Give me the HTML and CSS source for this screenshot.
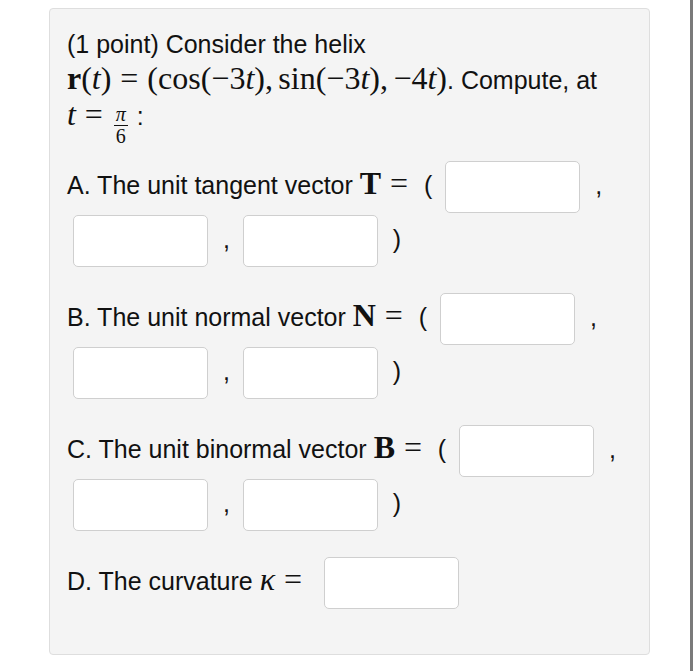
FILE: index.html
```html
<!DOCTYPE html>
<html>
<head>
<meta charset="utf-8">
<link rel="stylesheet" href="styles.css">
</head>
<body>
<div class="page">
  <div class="card">
    <p class="intro">(1 point) Consider the helix <span class="m"><b>r</b>(<i>t</i>)<span class="rel">=</span>(cos(−3<i>t</i>),<span class="th"></span>sin(−3<i>t</i>),<span class="th"></span>−4<i>t</i>)</span>. Compute, at <span class="m"><i>t</i><span class="rel">=</span><span class="frac"><span class="num"><i>π</i></span><span class="den">6</span></span></span> :</p>
    <p class="q">A. The unit tangent vector <span class="m"><b>T</b><span class="rel">=</span></span> ( <input class="ans" type="text"> , <input class="ans" type="text"> , <input class="ans" type="text"> )</p>
    <p class="q">B. The unit normal vector <span class="m"><b>N</b><span class="rel">=</span></span> ( <input class="ans" type="text"> , <input class="ans" type="text"> , <input class="ans" type="text"> )</p>
    <p class="q">C. The unit binormal vector <span class="m"><b>B</b><span class="rel">=</span></span> ( <input class="ans" type="text"> , <input class="ans" type="text"> , <input class="ans" type="text"> )</p>
    <p class="q">D. The curvature <span class="m"><i>κ</i><span class="rel">=</span></span> <input class="ans" type="text"></p>
  </div>
  <div class="edge"></div>
</div>
</body>
</html>
```
FILE: styles.css
```css
html, body {
  margin: 0;
  padding: 0;
  background: #ffffff;
}
.page {
  display: flex;
  height: 671px;
  padding-left: 49px;
  box-sizing: border-box;
}
.card {
  margin-top: 8px;
  width: 601px;
  height: 647px;
  box-sizing: border-box;
  background: #f4f4f4;
  border: 1px solid #dedede;
  border-radius: 4px;
  padding: 18px 14px 0 17px;
  font-family: "Liberation Sans", Arial, sans-serif;
  font-size: 25px;
  line-height: 34px;
  color: #111;
}
.edge {
  width: 3px;
  margin-left: 40px;
  background: #7a7a7a;
}
p {
  margin: 0;
}
.intro {
  margin-bottom: 15px;
}
.q {
  margin-bottom: 24px;
}
.m {
  font-family: "Liberation Serif", "Times New Roman", serif;
  font-size: 32px;
  white-space: nowrap;
}
.m b {
  font-weight: bold;
}
.m i {
  font-style: italic;
}
.rel {
  margin: 0 0.28em;
}
.th {
  display: inline-block;
  width: 0.17em;
}
.frac {
  display: inline-flex;
  flex-direction: column;
  align-items: center;
  vertical-align: 4px;
  font-size: 20px;
  line-height: 18px;
  padding: 0 2px;
}
.num {
  border-bottom: 1px solid #111;
  padding: 0 2px 2px;
}
.den {
  padding-top: 1px;
}
.ans {
  display: inline-block;
  box-sizing: border-box;
  width: 135px;
  height: 52px;
  margin: 1px 8px 1px 6px;
  padding: 0;
  background: #ffffff;
  border: 1px solid #cfcfcf;
  border-radius: 5px;
  vertical-align: middle;
  font: inherit;
}
```
